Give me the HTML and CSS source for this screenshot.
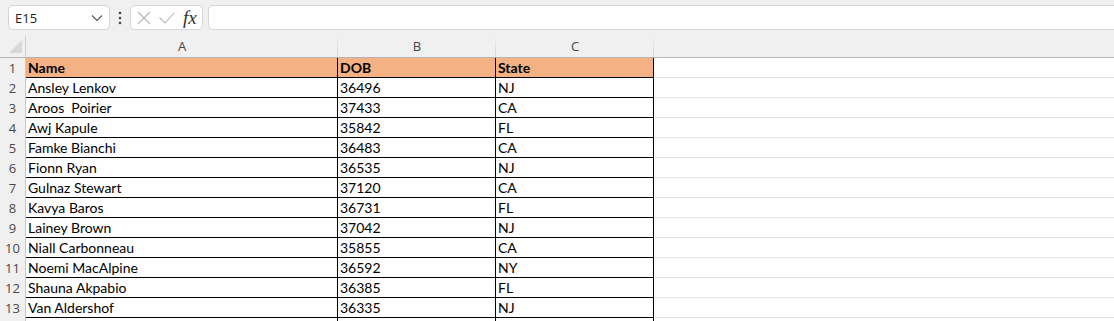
FILE: index.html
```html
<!DOCTYPE html>
<html lang="en">
<head>
    <meta charset="UTF-8">
    <title>Book1 - Excel</title>
    <link rel="stylesheet" href="styles.css">
</head>
<body>
    <div class="toolbar">
        <div class="name-box">
            <span>E15</span>
            <svg class="chevron" width="12" height="8" viewBox="0 0 12 8">
                <polyline points="1,1.5 6,6.5 11,1.5" fill="none" stroke="#555" stroke-width="1.1"/>
            </svg>
        </div>
        <div class="more">
            <svg width="4" height="14" viewBox="0 0 4 14">
                <circle cx="2" cy="2" r="1.3" fill="#444"/>
                <circle cx="2" cy="7" r="1.3" fill="#444"/>
                <circle cx="2" cy="12" r="1.3" fill="#444"/>
            </svg>
        </div>
        <div class="fx-box">
            <svg width="14" height="14" viewBox="0 0 14 14">
                <path d="M1 1 L13 13 M13 1 L1 13" stroke="#b8b8b8" stroke-width="1.1"/>
            </svg>
            <svg width="16" height="12" viewBox="0 0 16 12">
                <polyline points="0.5,5.5 6,11 15.5,0.5" fill="none" stroke="#b8b8b8" stroke-width="1.1"/>
            </svg>
            <span class="fx">fx</span>
        </div>
        <div class="formula-bar"></div>
    </div>

    <div class="sheet">
        <div class="row head">
            <div class="corner">
                <svg width="13" height="13" viewBox="0 0 13 13"><polygon points="13,0 13,13 0,13" fill="#d8d8d8"/></svg>
            </div>
            <div class="col-head">A</div>
            <div class="col-head">B</div>
            <div class="col-head">C</div>
            <div class="col-head rest"></div>
        </div>

        <div class="row title">
            <div class="num">1</div>
            <div class="cell">Name</div>
            <div class="cell">DOB</div>
            <div class="cell">State</div>
            <div class="rest"></div>
        </div>
        <div class="row">
            <div class="num">2</div>
            <div class="cell">Ansley Lenkov</div>
            <div class="cell">36496</div>
            <div class="cell">NJ</div>
            <div class="rest"></div>
        </div>
        <div class="row">
            <div class="num">3</div>
            <div class="cell">Aroos&nbsp; Poirier</div>
            <div class="cell">37433</div>
            <div class="cell">CA</div>
            <div class="rest"></div>
        </div>
        <div class="row">
            <div class="num">4</div>
            <div class="cell">Awj Kapule</div>
            <div class="cell">35842</div>
            <div class="cell">FL</div>
            <div class="rest"></div>
        </div>
        <div class="row">
            <div class="num">5</div>
            <div class="cell">Famke Bianchi</div>
            <div class="cell">36483</div>
            <div class="cell">CA</div>
            <div class="rest"></div>
        </div>
        <div class="row">
            <div class="num">6</div>
            <div class="cell">Fionn Ryan</div>
            <div class="cell">36535</div>
            <div class="cell">NJ</div>
            <div class="rest"></div>
        </div>
        <div class="row">
            <div class="num">7</div>
            <div class="cell">Gulnaz Stewart</div>
            <div class="cell">37120</div>
            <div class="cell">CA</div>
            <div class="rest"></div>
        </div>
        <div class="row">
            <div class="num">8</div>
            <div class="cell">Kavya Baros</div>
            <div class="cell">36731</div>
            <div class="cell">FL</div>
            <div class="rest"></div>
        </div>
        <div class="row">
            <div class="num">9</div>
            <div class="cell">Lainey Brown</div>
            <div class="cell">37042</div>
            <div class="cell">NJ</div>
            <div class="rest"></div>
        </div>
        <div class="row">
            <div class="num">10</div>
            <div class="cell">Niall Carbonneau</div>
            <div class="cell">35855</div>
            <div class="cell">CA</div>
            <div class="rest"></div>
        </div>
        <div class="row">
            <div class="num">11</div>
            <div class="cell">Noemi MacAlpine</div>
            <div class="cell">36592</div>
            <div class="cell">NY</div>
            <div class="rest"></div>
        </div>
        <div class="row">
            <div class="num">12</div>
            <div class="cell">Shauna Akpabio</div>
            <div class="cell">36385</div>
            <div class="cell">FL</div>
            <div class="rest"></div>
        </div>
        <div class="row">
            <div class="num">13</div>
            <div class="cell">Van Aldershof</div>
            <div class="cell">36335</div>
            <div class="cell">NJ</div>
            <div class="rest"></div>
        </div>
        <!-- row 14 is only a sliver at the bottom edge -->
        <div class="row">
            <div class="num"></div>
            <div class="cell"></div>
            <div class="cell"></div>
            <div class="cell"></div>
            <div class="rest"></div>
        </div>
    </div>
</body>
</html>
```

FILE: styles.css
```css
html, body {
    height: 100%;
    margin: 0;
    overflow: hidden;
}

body {
    background: #f0f0f0;
    font-family: "Open Sans", "Noto Sans", sans-serif;
}

/* formula bar strip */
.toolbar {
    display: flex;
    align-items: flex-start;
    height: 36px;
    padding: 5px 0 0 8px;
    box-sizing: border-box;
}

.name-box {
    display: flex;
    align-items: center;
    justify-content: space-between;
    width: 102px;
    height: 25px;
    box-sizing: border-box;
    padding: 0 6px 0 6px;
    background: #ffffff;
    border: 1px solid #d4d4d4;
    border-radius: 5px;
    font-size: 13px;
    color: #222;
}

.chevron {
    margin-top: 1px;
}

.more {
    width: 20px;
    height: 25px;
    display: flex;
    justify-content: center;
    align-items: center;
}

.fx-box {
    display: flex;
    align-items: center;
    width: 73px;
    height: 25px;
    box-sizing: border-box;
    padding: 0 4px 0 6px;
    gap: 8px;
    background: #ffffff;
    border: 1px solid #d8d8d8;
    border-radius: 5px;
}

.fx {
    font-family: "Liberation Serif", serif;
    font-style: italic;
    font-size: 19px;
    color: #333;
    line-height: 1;
}

.formula-bar {
    flex: 1;
    height: 25px;
    margin-left: 5px;
    margin-right: -10px;
    box-sizing: border-box;
    background: #ffffff;
    border: 1px solid #d4d4d4;
    border-radius: 5px;
}

/* grid */
.row {
    display: grid;
    grid-template-columns: 26px 312px 158px 158px 1fr;
    height: 20px;
    font-family: Lato, "Liberation Sans", sans-serif;
    font-size: 14px;
    background: #ffffff;
}

.row > div {
    box-sizing: border-box;
    border-bottom: 1px solid #e1e1e1;
    white-space: nowrap;
    overflow: hidden;
}

.row.head {
    height: 22px;
    background: #f0f0f0;
    font-family: "Open Sans", "Noto Sans", sans-serif;
    font-size: 13px;
    color: #444;
}

.row.head > div {
    border-bottom: 1px solid #b4b4b4;
}

.corner {
    display: flex;
    justify-content: flex-end;
    align-items: flex-end;
    padding: 0 3px 4px 0;
    border-right: 1px solid #d0d0d0;
}

.col-head {
    text-align: center;
    line-height: 20px;
    background: linear-gradient(#f0f0f0, #d2d2d2) right / 1px 100% no-repeat;
}

.col-head.rest {
    background: none;
}

.num {
    background: #f0f0f0;
    border-right: 1px solid #c8c8c8;
    text-align: center;
    font-family: "Open Sans", "Noto Sans", sans-serif;
    font-size: 13px;
    line-height: 20px;
    color: #4a4a4a;
}

.row > .num {
    border-bottom: none;
}

.row > .cell {
    border-right: 1px solid #000;
    border-bottom: 1px solid #000;
    padding-left: 2px;
    line-height: 20px;
    color: #000;
}

.title .cell {
    background: #f4b183;
    font-weight: bold;
}
```
